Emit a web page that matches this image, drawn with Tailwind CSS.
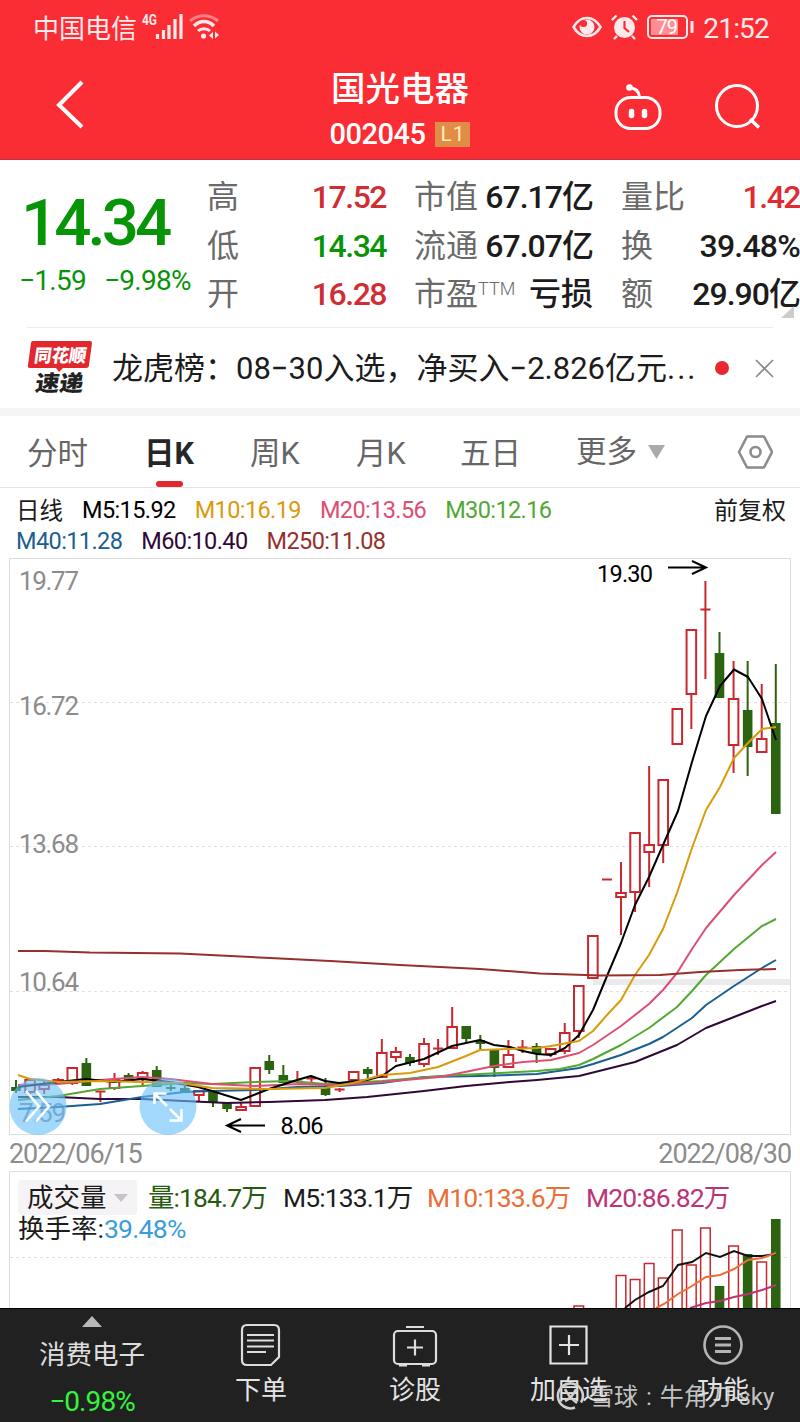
<!DOCTYPE html>
<html lang="zh-CN">
<head>
<meta charset="UTF-8">
<meta name="viewport" content="width=device-width, initial-scale=1.0">
<title>国光电器 002045</title>
<script src="https://cdn.jsdelivr.net/npm/@tailwindcss/browser@4"></script>
</head>
<body class="w-[800px] h-[1422px] overflow-hidden bg-white text-[#1c1c1c] [font-family:Roboto,'Noto_Sans_CJK_SC',sans-serif] whitespace-nowrap">
<div class="flex flex-col w-[800px] h-[1422px] relative">

    <header class="h-40 bg-[#fa2c34] text-white border-b border-[#c9303a] flex flex-col">
        <!-- status bar -->
        <div class="h-14 flex items-center justify-between pl-[33px] pr-[31px] text-white/90">
            <div class="flex items-center">
                <span class="text-[26px] leading-14 pt-px">中国电信</span>
                <svg class="w-[90px] h-14" viewBox="137 0 90 56" fill="none" stroke="#ffe9ea">
                    <text x="142" y="25" font-size="15" font-weight="700" fill="#ffe9ea" stroke="none" textLength="15" lengthAdjust="spacingAndGlyphs">4G</text>
                    <path d="M157.500 34v5M163.500 30v9M169 25v14M175 19v20M181 14v25" stroke-width="3.200"/>
                    <path d="M190 21c8-7 20-7 28 0" stroke-width="3" opacity=".45"/>
                    <path d="M194 26c6-6 14-6 20 0" stroke-width="3.500"/>
                    <path d="M198 31c3-3 9-3 12 0" stroke-width="3"/>
                    <circle cx="203.500" cy="36" r="2.600" fill="#ffe9ea" stroke="none"/>
                    <path d="M213 32v7l-4-3.500zM215 31.500v7l4-3.500z" fill="#ffe9ea" stroke="none"/>
                </svg>
            </div>
            <div class="flex items-center">
                <svg class="w-[131px] h-14" viewBox="571 0 131 56" fill="none" stroke="#ffe9ea">
                    <path d="M572.500 27c7-12 20-12 27 0c-7 12-20 12-27 0z" stroke-width="2.600"/>
                    <circle cx="586" cy="27" r="7.500" fill="#ffe9ea" stroke="none"/>
                    <circle cx="582.500" cy="23.500" r="3.600" fill="#fa2c34" stroke="none"/>
                    <circle cx="623.500" cy="27.500" r="10.500" fill="#ffe9ea" stroke="none"/>
                    <path d="M611 20l4.500-4.500M636 20l-4.500-4.500M616 36l-3 3M631 36l3 3" stroke-width="2.400"/>
                    <path d="M623.500 21v7l4.500 4" stroke="#fa2c34" stroke-width="2.200"/>
                    <rect x="647" y="16" width="39" height="22" rx="4" stroke-width="2"/>
                    <rect x="650" y="19" width="27" height="16" rx="1" fill="#ff8f93" stroke="none"/>
                    <path d="M691 21v12" stroke-width="3"/>
                    <text x="655.500" y="34" font-size="20" fill="#fff" stroke="none" textLength="21.500">79</text>
                </svg>
                <span class="text-[28px] leading-14 tracking-[-0.8px] pt-px">21:52</span>
            </div>
        </div>
        <!-- title bar -->
        <div class="flex-1 flex justify-between">
            <svg class="w-[200px] h-[103px]" viewBox="0 56 200 103" fill="none" stroke="#fff" stroke-width="4"><path d="M82 82L59 105L82 127"/></svg>
            <div class="flex flex-col items-center pt-[9px]">
                <h1 class="text-[34.500px] leading-[48px] font-medium">国光电器</h1>
                <div class="flex items-center gap-2.5 h-[42px]">
                    <span class="text-[29px] font-medium tracking-[-0.5px] pt-0.5">002045</span>
                    <span class="w-[35px] h-[25px] bg-[#e08d45] text-[#ffeebb] text-[21px] leading-[25px] text-center tracking-[1px]">L1</span>
                </div>
            </div>
            <svg class="w-[200px] h-[103px]" viewBox="600 56 200 103" fill="none" stroke="#fff" stroke-width="3">
                <rect x="616" y="97.500" width="44" height="31" rx="14.500"/>
                <path d="M629.500 88c6 0 9.500 3 10 9"/>
                <circle cx="629.500" cy="87.500" r="3.300" fill="#fff" stroke="none"/>
                <path d="M631.500 111.500v4M644.500 111.500v4" stroke-width="5.500" stroke-linecap="round"/>
                <circle cx="737" cy="106" r="20.500"/>
                <path d="M750 119l9 8.500" stroke-width="3.500"/>
            </svg>
        </div>
    </header>

    <!-- quote -->
    <section class="h-[167px] flex relative">
        <div class="w-[207px] text-[#079407] flex flex-col">
            <div class="pl-[21px] pt-[28px] text-[65.500px] leading-[70px] font-medium tracking-[-4px]">14.34</div>
            <div class="pl-[19px] h-[44px] flex text-[28px] leading-[46px] tracking-[-0.7px]">
                <span class="w-[85px]">−1.59</span><span>−9.98%</span>
            </div>
        </div>
        <div class="flex gap-7 pt-[13px] text-[32px] leading-[48.500px]">
            <dl class="w-[179px] flex flex-col">
                <div class="flex justify-between"><dt class="text-[#6a6a6a]">高</dt><dd class="text-[#cf2f34] font-medium tracking-[-1.500px]">17.52</dd></div>
                <div class="flex justify-between"><dt class="text-[#6a6a6a]">低</dt><dd class="text-[#079407] font-medium tracking-[-1.500px]">14.34</dd></div>
                <div class="flex justify-between"><dt class="text-[#6a6a6a]">开</dt><dd class="text-[#cf2f34] font-medium tracking-[-1.500px]">16.28</dd></div>
            </dl>
            <dl class="w-[179px] flex flex-col">
                <div class="flex justify-between"><dt class="text-[#6a6a6a]">市值</dt><dd class="font-medium tracking-[-1px]">67.17亿</dd></div>
                <div class="flex justify-between"><dt class="text-[#6a6a6a]">流通</dt><dd class="font-medium tracking-[-1px]">67.07亿</dd></div>
                <div class="flex justify-between"><dt class="text-[#6a6a6a] flex">市盈<span class="text-[18px] leading-[38px] font-light">TTM</span></dt><dd class="font-medium">亏损</dd></div>
            </dl>
            <dl class="w-[179px] flex flex-col">
                <div class="flex justify-between"><dt class="text-[#6a6a6a]">量比</dt><dd class="text-[#e02c30] font-medium tracking-[-1.500px]">1.42</dd></div>
                <div class="flex justify-between"><dt class="text-[#6a6a6a]">换</dt><dd class="font-medium tracking-[-0.8px]">39.48%</dd></div>
                <div class="flex justify-between"><dt class="text-[#6a6a6a]">额</dt><dd class="font-medium tracking-[-1px]">29.90亿</dd></div>
            </dl>
        </div>
        <svg class="absolute left-[781px] top-[146px] w-[13px] h-3" viewBox="0 0 13 12"><path d="M13 0v12H0z" fill="#ccc"/></svg>
    </section>

    <!-- news -->
    <section class="h-[81px] mx-[27px] border-t border-[#ececec] flex items-center">
        <svg class="w-[66px] h-[56px] shrink-0" viewBox="27 340 66 56">
            <path d="M33 341h57q2 0 2 2l-3 22q0 3-3 3H63l-4 4l-3-4H30q-3 0-2-3l3-22q0-2 2-2z" fill="#e0282e"/>
            <g font-weight="900" transform="skewX(-8)">
                <text x="84.500" y="362" font-size="18" fill="#fff" textLength="52" lengthAdjust="spacingAndGlyphs">同花顺</text>
                <text x="89.500" y="391.500" font-size="22" fill="#222" textLength="48" lengthAdjust="spacingAndGlyphs">速递</text>
            </g>
        </svg>
        <p class="pl-[19px] w-[603px] shrink-0 text-[31px] pt-[3px]">龙虎榜：08−30入选，净买入−2.826亿元<span class="tracking-[2px]">...</span></p>
        <span class="ml-[19px] w-[14px] h-[14px] shrink-0 rounded-full bg-[#e8282c]"></span>
        <svg class="ml-[26px] w-[19px] h-[19px] shrink-0" viewBox="0 0 19 19" stroke="#888" stroke-width="1.600"><path d="M1 1l17 17M18 1L1 18"/></svg>
    </section>
    <div class="h-2 bg-[#f5f5f5]"></div>

    <!-- period tabs -->
    <nav class="h-[72px] border-b border-[#e6e6e6] flex text-[30.500px] leading-[76px] text-[#666] pl-[27px]">
        <span class="w-[117px]">分时</span>
        <span class="w-[106px] font-bold text-[#262626] relative">日K<i class="absolute left-3 bottom-0 w-[27px] h-[6px] rounded-full bg-[#e0282e]"></i></span>
        <span class="w-[106px]">周K</span>
        <span class="w-[104px]">月K</span>
        <span class="w-[116px]">五日</span>
        <span class="w-[161px] flex items-center gap-[11px]">更多<svg class="w-[17px] h-[14px]" viewBox="0 0 17 14"><path d="M0 0h17L8.500 14z" fill="#aaa"/></svg></span>
        <svg class="w-9 h-[72px]" viewBox="737 416 36 72" fill="none" stroke="#8c8c8c" stroke-width="2.600" stroke-linejoin="round"><path d="M747 436.500h17l8 15.500l-8 15.500h-17l-8-15.500z"/><circle cx="755.500" cy="452" r="5"/></svg>
    </nav>

    <!-- moving averages -->
    <div class="h-[68px] pl-4 pr-[14px] pt-[7px] text-[23.500px] leading-[31px] tracking-[-0.6px]">
        <div class="flex gap-[19px]">
            <span class="tracking-normal pt-px">日线</span><span class="text-black">M5:15.92</span><span class="text-[#d99a0b]">M10:16.19</span><span class="text-[#dc4f75]">M20:13.56</span><span class="text-[#52a832]">M30:12.16</span><span class="ml-auto text-[24px] tracking-normal pt-px">前复权</span>
        </div>
        <div class="flex gap-[19px] -mt-px">
            <span class="text-[#1b5f91]">M40:11.28</span><span class="text-[#2f0838]">M60:10.40</span><span class="text-[#97302c]">M250:11.08</span>
        </div>
    </div>

    <!-- candles -->
    <svg class="w-[800px] h-[582px]" viewBox="0 556 800 582" fill="none">
        <path d="M9.500 558.500h781v576H9.500z" stroke="#dedede"/>
        <path d="M10 702.500h780M10 846.500h780M10 991.500h780" stroke="#e2e2e2" stroke-dasharray="3 3"/>
        <path d="M593 979h197v6H593z" fill="#ebebed"/>
        <g font-size="26" fill="#8c8c8c">
            <text x="19" y="590" textLength="60">19.77</text>
            <text x="19" y="714.500" textLength="60">16.72</text>
            <text x="19" y="852.500" textLength="60">13.68</text>
            <text x="19" y="990.500" textLength="60">10.64</text>
            <text x="19" y="1122" textLength="47">7.59</text>
        </g>
        <g id="candles" stroke-width="2"></g>
        <g stroke-width="2" stroke-linejoin="round">
            <polyline stroke="#2f0838" points="18,1097 58,1097 100,1099 142,1099 184,1101 227,1103 269,1102 325,1100 367,1097 424,1091 466,1086 510,1082 537,1080 579,1076 607,1069 635,1062 677,1045 706,1028 734,1017 762,1006 776,1001"/>
            <polyline stroke="#1b5f91" points="18,1109 58,1107 100,1104 142,1097 184,1092 212,1091 255,1090 297,1087 340,1086 382,1083 424,1077 480,1076 537,1074 579,1068 593,1064 621,1055 649,1044 663,1037 692,1018 706,1005 734,986 762,968 776,960"/>
            <polyline stroke="#52a832" points="18,1100 58,1096 100,1089 142,1086 184,1083 212,1084 255,1082 290,1081 325,1084 382,1081 440,1076 480,1074 537,1071 560,1069 579,1065 593,1059 621,1045 649,1028 677,1007 692,991 706,975 734,949 762,926 776,919"/>
            <polyline stroke="#dc4f75" points="18,1085 58,1084 100,1080 142,1077 170,1079 212,1084 255,1086 300,1084 340,1085 382,1082 440,1077 470,1071 494,1066 523,1062 551,1060 579,1053 593,1045 621,1026 649,1004 663,990 677,973 692,949 706,928 734,895 762,865 776,852"/>
            <polyline stroke="#000" points="18,1087 58,1082 86,1079 114,1082 142,1079 170,1082 198,1087 212,1091 241,1100 269,1089 297,1080 311,1076 325,1081 339,1083 367,1080 382,1076 396,1066 424,1059 452,1046 480,1040 494,1045 510,1047 523,1051 537,1054 551,1055 565,1048 579,1035 593,1010 607,976 621,943 635,905 649,877 663,845 678,811 692,762 706,716 720,686 734,669.500 748,677 762,699 776,740"/>
            <polyline stroke="#d99a0b" points="18,1075 30,1079 58,1082 100,1081 142,1082 180,1083 212,1088 269,1089 325,1088 353,1083 382,1075 410,1073 438,1067 466,1056 480,1050 508,1049 537,1048 551,1046 579,1041 593,1031 607,1015 621,1000 635,975 649,955 663,929 677,893 692,848 706,810 720,787 734,758 748,743 762,729 776,727"/>
            <polyline stroke="#97302c" points="18,951 45,951 90,952.500 180,953.500 270,958 330,961 400,965 480,969 540,973.500 600,975.500 660,975 700,972 740,970 776,969"/>
        </g>
        <g stroke="#000" stroke-width="2">
            <path d="M668 567.500h37M692 561l14 6.500l-14 6.500"/>
            <path d="M265 1125.500h-37M241 1119l-14 6.500l14 6.500"/>
        </g>
        <g font-size="23.500" fill="#000">
            <text x="597" y="582" textLength="56">19.30</text>
            <text x="280.500" y="1133.500" textLength="43">8.06</text>
        </g>
        <circle cx="38" cy="1106.500" r="28.500" fill="#68c0fa" fill-opacity=".62"/>
        <circle cx="168" cy="1106.500" r="28.500" fill="#68c0fa" fill-opacity=".62"/>
        <g stroke="#fff" stroke-width="2.600">
            <path d="M26 1091l13 15.500l-13 15M36 1091l13 15.500l-13 15"/>
            <path d="M155 1094l12 12M154.500 1104v-10.500h12M170 1109l11 11M181.500 1109v11.500h-12"/>
        </g>
    </svg>

    <div class="h-[33px] flex justify-between px-[9px] text-[27px] leading-[33px] tracking-[-1.1px] text-[#8c8c8c]">
        <span>2022/06/15</span><span>2022/08/30</span>
    </div>

    <!-- volume -->
    <section class="h-[137px] relative overflow-hidden">
        <svg class="absolute inset-0 w-[800px] h-[137px]" viewBox="0 1171 800 137" fill="none">
            <path d="M9.500 1310v-138.500h781v138.500" stroke="#dedede"/>
            <path d="M10 1257.500h780" stroke="#e2e2e2" stroke-dasharray="3 3"/>
            <g id="volume" stroke-width="1.500"></g>
            <g stroke-width="2">
                <polyline stroke="#111" points="625,1308 635,1300 649,1292 663,1286 678,1265 692,1262 706,1253 720,1257 734,1251 748,1256 762,1256 776,1254"/>
                <polyline stroke="#ec6d35" points="656,1308 664,1304 678,1294 692,1286 706,1277 720,1275 734,1269 748,1260 762,1258 776,1253"/>
                <polyline stroke="#bc3474" points="690,1308 706,1303 720,1301 734,1297 748,1294 762,1290 776,1285"/>
            </g>
        </svg>
        <div class="relative pl-[18px] pt-[9px] text-[26.500px]">
            <div class="flex h-[35px] leading-[36px] tracking-[-0.9px]">
                <span class="w-[119px] bg-[#f5f3f5] rounded pl-[9px] mr-[11px] flex items-center gap-[7px] tracking-normal">成交量<svg class="w-[14px] h-2" viewBox="0 0 14 8"><path d="M0 0h14L7 8z" fill="#c6c4c6"/></svg></span>
                <span class="w-[135px] text-[#285a10]">量:184.7万</span>
                <span class="w-[144px]">M5:133.1万</span>
                <span class="w-[159px] text-[#ec6d35]">M10:133.6万</span>
                <span class="text-[#bc3474]">M20:86.82万</span>
            </div>
            <div class="leading-[28px]">换手率:<span class="text-[#3a9ddb] tracking-[-0.7px]">39.48%</span></div>
        </div>
    </section>

    <footer class="h-[114px] bg-[#212121] border-t border-black text-[#e4e4e4] flex text-[26px]">
        <div class="w-[184px] flex flex-col items-center pt-[7px]">
            <svg class="w-5 h-[11px]" viewBox="0 0 20 11"><path d="M10 0l10 11H0z" fill="#b8b8b8"/></svg>
            <span class="text-[26.500px] leading-[56px] text-[#ddd]">消费电子</span>
            <span class="text-[28px] leading-[38px] text-[#33f53a] tracking-[-0.9px]">−0.98%</span>
        </div>
        <div class="w-[154px] flex flex-col items-center pt-[14px]">
            <svg class="w-[42px] h-[44px]" viewBox="0 0 42 44" fill="none" stroke="#ddd" stroke-width="2.200"><path d="M7 2h27q5 0 5 5v27l-8 8H7q-5 0-5-5V7q0-5 5-5z"/><path d="M7 12h27M7 17.500h27M7 23.500h27M7 29h19"/></svg>
            <span class="leading-[46px]">下单</span>
        </div>
        <div class="w-[154px] flex flex-col items-center pt-[14px]">
            <svg class="w-[46px] h-[44px]" viewBox="0 0 46 44" fill="none" stroke="#ddd" stroke-width="2.200"><rect x="2" y="8" width="42" height="33" rx="4"/><path d="M14 4h18M7 42.500h8M30 42.500h8M15 24.500h16M23 16.500v16"/></svg>
            <span class="leading-[46px]">诊股</span>
        </div>
        <div class="w-[154px] flex flex-col items-center pt-[14px]">
            <svg class="w-[42px] h-[44px]" viewBox="0 0 42 44" fill="none" stroke="#e4e4e4" stroke-width="2.200"><path d="M2.500 3.500h36v37h-36zM11 22h20M21 12v20"/></svg>
            <span class="leading-[46px]">加自选</span>
        </div>
        <div class="w-[154px] flex flex-col items-center pt-[14px]">
            <svg class="w-[42px] h-[44px]" viewBox="0 0 42 44" fill="none" stroke="#b4b4b4" stroke-width="2.600"><circle cx="21" cy="22" r="18.500"/><path d="M13 15.500h16M13 22h16M13 28.500h16" stroke-width="3"/></svg>
            <span class="leading-[46px]">功能</span>
        </div>
    </footer>

    <!-- watermark -->
    <div class="absolute left-[556px] top-[1380px] flex items-center gap-1 h-8 text-[24px] leading-8 text-[#d8d8d8]/90">
        <svg class="w-[30px] h-[30px]" viewBox="0 0 30 30" fill="none" stroke="#d0d0d0" stroke-width="2.600"><path d="M19 26.500a12.500 12.500 0 1 1 6-5M9 8q3 7 12 14M20 8q-3 8-11 12"/></svg>
        <span class="pt-px">雪球<span class="px-[8px]">:</span>牛角刀-sky</span>
    </div>
</div>

<script>
const RED = '#c9282e', GREEN = '#2c6310';
// up/down, high, body top, body bottom, low
const days = [
    ['d',1080,1087,1091,1093],['u',1078,1080,1092,1094],['u',1080,1085,1089,1094],['u',1078,1080,1083,1083],
    ['u',1068,1068,1083,1085],['d',1058,1063,1086,1086],['u',1091,1091,1092,1102],['u',1073,1080,1088,1090],
    ['d',1073,1075,1081,1081],['u',1071,1073,1079,1086],['d',1066,1070,1087,1087],['d',1083,1087,1089,1091],
    ['d',1086,1088,1093,1093],['u',1090,1091,1095,1102],['d',1090,1090,1102,1107],['d',1103,1103,1109,1112],
    ['u',1102,1107,1110,1110],['u',1068,1068,1106,1106],['d',1055,1061,1070,1074],['d',1065,1075,1083,1083],
    ['u',1071,1081,1083,1083],['u',1077,1078,1080,1082],['d',1078,1088,1095,1096],['u',1088,1089,1090,1092],
    ['u',1072,1072,1080,1080],['d',1067,1069,1074,1079],['u',1039,1053,1077,1077],['u',1047,1052,1057,1062],
    ['d',1054,1057,1063,1066],['u',1038,1044,1064,1067],['u',1039,1048,1050,1055],['u',1007,1027,1048,1048],
    ['d',1026,1026,1039,1043],['d',1035,1040,1044,1050],['d',1050,1050,1068,1077],['u',1040,1055,1067,1067],
    ['u',1040,1047,1048,1053],['d',1043,1046,1054,1063],['u',1048,1049,1054,1057],['u',1023,1033,1051,1054],
    ['u',986,986,1031,1038],['u',936,936,978,978],['u',879,879,880,880],['u',862,893,897,935],
    ['u',833,833,892,912],['u',766,845,852,887],['u',780,780,845,863],['u',709,709,744,744],
    ['u',630,630,694,729],['u',581,609,610,679],['d',632,653,698,698],['u',661,699,745,773],
    ['d',661,710,747,776],['u',684,739,752,752],['d',664,723,814,814],
];
let out = '';
days.forEach(([dir, high, top, bottom, low], i) => {
    const x = 16 + i * 14.07, h = bottom - top;
    if (dir === 'd') {
        out += `<path d="M${x} ${high}V${low}" stroke="${GREEN}"/><rect x="${x - 4.8}" y="${top}" width="9.600" height="${h}" fill="${GREEN}"/>`;
    } else if (h < 3) {
        out += `<path d="M${x} ${high}V${low}M${x - 5} ${top + .5}h10" stroke="${RED}"/>`;
    } else {
        out += `<path d="M${x} ${high}V${top}M${x} ${bottom}V${low}M${x - 4.8} ${top}h9.600v${h}h-9.600z" stroke="${RED}"/>`;
    }
});
document.getElementById('candles').innerHTML = out;

const vol = [
    ['u',40,1306],['u',43,1275.5],['u',44,1279.5],['u',45,1263.5],['u',46,1278],['u',47,1230],['u',48,1265],
    ['u',49,1228],['d',50,1286],['u',51,1246],['d',52,1254],['u',53,1262],['d',54,1219],
];
document.getElementById('volume').innerHTML = vol.map(([dir, i, top]) => {
    const x = 16 + i * 14.07;
    return dir === 'd'
        ? `<rect x="${x - 4.8}" y="${top}" width="9.600" height="100" fill="${GREEN}"/>`
        : `<rect x="${x - 4.8}" y="${top}" width="9.600" height="100" stroke="${RED}"/>`;
}).join('');
</script>
</body>
</html>
